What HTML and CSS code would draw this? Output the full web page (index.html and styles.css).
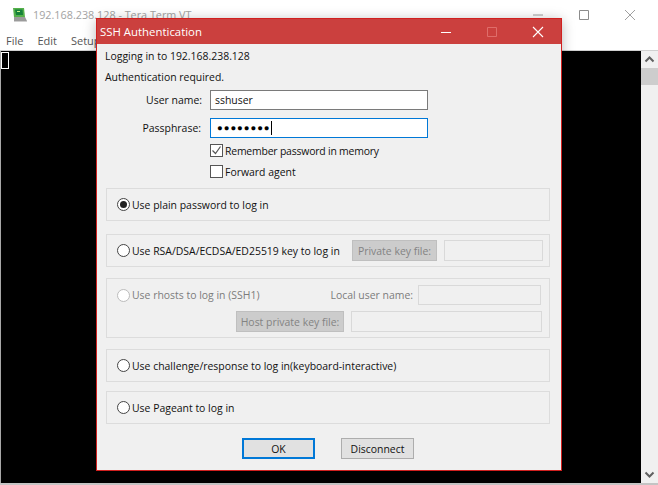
FILE: index.html
```html
<!DOCTYPE html>
<html lang="en">
<head>
<meta charset="utf-8">
<title>SSH Authentication</title>
<link rel="stylesheet" href="styles.css">
</head>
<body>
<div class="app">
  <header class="app-title">
    <svg class="app-icon" width="16" height="16" viewBox="0 0 16 16"><path d="M2 1h11l1 9H3z" fill="#55b04a"/><path d="M4 2.500h7.500l.5 5.500H5z" fill="#15803a"/><path d="M6 4h3v1H6z" fill="#c8ef86"/><path d="M3 10h11l2 4H3z" fill="#9b9b9b"/><path d="M3 14h13v1H3z" fill="#cfcfcf"/></svg>
    <span class="app-name">192.168.238.128 - Tera Term VT</span>
    <div class="app-controls">
      <svg class="ctl" width="46" height="12" viewBox="0 0 46 12"><path d="M18 6h10" stroke="#a0a0a0" fill="none"/></svg>
      <svg class="ctl" width="46" height="12" viewBox="0 0 46 12"><path d="M18.500 1.500h9v9h-9z" stroke="#8c8c8c" fill="none"/></svg>
      <svg class="ctl" width="46" height="12" viewBox="0 0 46 12"><path d="M18 1l10 10M28 1L18 11" stroke="#a0a0a0" fill="none"/></svg>
    </div>
  </header>
  <nav class="app-menu"><span>File</span><span>Edit</span><span>Setup</span></nav>
  <main class="terminal-row">
    <div class="terminal"><div class="cursor"></div></div>
    <div class="scrollbar">
      <svg width="17" height="17" viewBox="0 0 17 17"><path d="M4.500 10.500l4-4 4 4" stroke="#606060" stroke-width="2" fill="none"/></svg>
      <div class="thumb"></div>
      <div class="track"></div>
      <svg width="17" height="17" viewBox="0 0 17 17"><path d="M4.500 6.500l4 4 4-4" stroke="#606060" stroke-width="2" fill="none"/></svg>
    </div>
  </main>
</div>

<section class="dialog">
  <header class="dlg-title">
    <span class="dlg-name">SSH Authentication</span>
    <svg class="dlg-ctl" width="46" height="12" viewBox="0 0 46 12"><path d="M18 6.500h10" stroke="#fff" fill="none"/></svg>
    <svg class="dlg-ctl" width="46" height="12" viewBox="0 0 46 12"><path d="M18.500 1.500h9v9h-9z" stroke="#df6d6a" fill="none"/></svg>
    <svg class="dlg-ctl" width="46" height="12" viewBox="0 0 46 12"><path d="M18 1l10 10M28 1L18 11" stroke="#fff" stroke-width="1.100" fill="none"/></svg>
  </header>
  <div class="dlg-body">
    <p class="line first">Logging in to 192.168.238.128</p>
    <p class="line second">Authentication required.</p>

    <div class="form">
      <label class="lbl lbl-user">User name:</label>
      <div class="input">sshuser</div>
      <label class="lbl lbl-pass">Passphrase:</label>
      <div class="input focused"><span class="dots">●●●●●●●●</span><span class="caret"></span></div>
      <div class="check-row c1">
        <span class="check"><svg width="13" height="13" viewBox="0 0 13 13"><path d="M2.500 6.500l3 3 5-7" stroke="#555" stroke-width="1.200" fill="none"/></svg></span>
        <span class="tight">Remember password in memory</span>
      </div>
      <div class="check-row c2"><span class="check"></span><span>Forward agent</span></div>
    </div>

    <div class="group g-plain">
      <span class="radio on"></span><span class="rtext">Use plain password to log in</span>
    </div>

    <div class="group g-rsa">
      <span class="radio"></span><span class="rtext">Use RSA/DSA/ECDSA/ED25519 key to log in</span>
      <span class="btn-off b-key">Private key file:</span>
      <span class="input-off i-key"></span>
    </div>

    <div class="group g-rhosts disabled">
      <div class="rh-row1">
        <span class="radio"></span><span class="rtext">Use rhosts to log in (SSH1)</span>
        <span class="local">Local user name:</span>
        <span class="input-off i-local"></span>
      </div>
      <div class="rh-row2">
        <span class="btn-off b-host">Host private key file:</span>
        <span class="input-off i-host"></span>
      </div>
    </div>

    <div class="group g-chal">
      <span class="radio"></span><span class="rtext">Use challenge/response to log in(keyboard-interactive)</span>
    </div>

    <div class="group g-pag">
      <span class="radio"></span><span class="rtext">Use Pageant to log in</span>
    </div>

    <div class="actions">
      <button class="btn primary" type="button">OK</button>
      <button class="btn" type="button">Disconnect</button>
    </div>
  </div>
</section>
</body>
</html>
```

FILE: styles.css
```css
* { box-sizing: border-box; }
html, body { margin: 0; padding: 0; }
body {
  width: 658px; height: 485px; overflow: hidden; position: relative;
  font-family: "Open Sans", "Noto Sans", sans-serif; font-size: 10.45px; color: #111; background: #fff;
}
.app { height: 485px; display: flex; flex-direction: column; border-bottom: 2px solid #c4c4c4; }
.app-title { height: 32px; display: flex; align-items: center; padding-left: 11px; background: #fff; flex: none; }
.app-icon { margin-right: 6px; margin-top: -3px; flex: none; }
.app-name { color: #a3a3a3; font-size: 10.8px; margin-top: -3px; }
.app-controls { margin-left: auto; display: flex; margin-top: -3px; margin-right: 5px; }
.ctl { display: block; }
.app-menu { height: 18px; display: flex; gap: 14px; padding-left: 6px; color: #555; font-size: 11px; align-items: center; flex: none; margin-top: -1px; margin-bottom: 1px; }
.terminal-row { flex: 1; display: flex; min-height: 0; border-top: 1px solid #d0d0d0; }
.terminal { flex: 1; background: #000; padding-top: 1px; border-left: 1px solid #a8a8a8; }
.cursor { width: 8px; height: 17px; border: 1px solid #fff; }
.scrollbar { width: 17px; background: #f0f0f0; display: flex; flex-direction: column; }
.scrollbar svg { display: block; flex: none; }
.thumb { height: 17px; background: #cdcdcd; flex: none; }
.track { flex: 1; }

.dialog {
  position: absolute; left: 96px; top: 18px; width: 466px; height: 453px;
  border: 1px solid #d1201f; background: #f0f0f0;
  box-shadow: 0 2px 12px rgba(0,0,0,.28);
  display: flex; flex-direction: column;
}
.dlg-title { height: 25px; background: #cb403e; color: #fff; display: flex; align-items: center; flex: none; }
.dlg-name { font-size: 11.4px; margin-left: 3px; margin-right: auto; }
.dlg-ctl { display: block; }
.dlg-body { flex: 1; padding: 0 11px 0 9px; position: relative; }
.line { margin: 0 0 0 -1px; height: 16px; line-height: 16px; white-space: nowrap; }
.first { margin-top: 4px; }
.second { margin-top: 5px; }

.form { display: grid; grid-template-columns: 104px 218px; margin-top: 5px; height: 98px; grid-template-rows: 20px 20px 21px 21px; }
.lbl { text-align: right; line-height: 20px; padding-right: 8px; }
.lbl-pass { margin-top: 8px; padding-right: 9px; }
.input { height: 20px; border: 1px solid #7a7a7a; background: #fff; line-height: 18px; padding-left: 4px; }
.input.focused { border-color: #0078d7; margin-top: 8px; display: flex; align-items: center; padding-left: 6px; }
.dots { font-size: 9.5px; letter-spacing: 0.95px; line-height: 18px; color: #000; white-space: nowrap; }
.caret { width: 1px; height: 14px; background: #000; margin-left: 0; flex: none; }
.check-row { grid-column: 2; display: flex; align-items: center; gap: 2px; white-space: nowrap; }
.c1 { margin-top: 13px; height: 15px; }
.c2 { margin-top: 13px; height: 15px; }
.tight { letter-spacing: -0.2px; }
.check { width: 13px; height: 13px; border: 1px solid #555; background: #fff; display: block; flex: none; position: relative; }
.check svg { position: absolute; left: -1px; top: -1px; }

.group { border: 1px solid #dcdcdc; display: flex; align-items: center; padding-left: 10px; width: 444px; white-space: nowrap; }
.radio { width: 13px; height: 13px; border: 1px solid #444; border-radius: 50%; background: #fff; flex: none; display: block; position: relative; }
.radio.on::after { content: ""; position: absolute; left: 2px; top: 2px; width: 7px; height: 7px; border-radius: 50%; background: #222; }
.rtext { margin-left: 2px; }
.g-plain { height: 33px; }
.g-rsa { height: 33px; margin-top: 13px; }
.g-rhosts { height: 60px; margin-top: 11px; display: block; padding: 0 8px 0 10px; }
.g-chal { height: 33px; margin-top: 11px; }
.g-pag { height: 33px; margin-top: 9px; }
.btn-off { background: #cccccc; border: 1px solid #bfbfbf; color: #838383; display: flex; align-items: center; justify-content: center; flex: none; }
.input-off { border: 1px solid #d9d9d9; background: #f0f0f0; display: block; flex: none; }
.b-key { width: 85px; height: 21px; margin-left: auto; }
.i-key { width: 99px; height: 21px; margin-left: 7px; margin-right: 6px; }
.disabled .radio { border-color: #bcbcbc; }
.disabled .rtext { color: #7c7c7c; }
.rh-row1 { display: flex; align-items: center; height: 20px; margin-top: 6px; }
.local { margin-left: auto; color: #7c7c7c; }
.i-local { width: 123px; height: 20px; margin-left: 5px; }
.rh-row2 { display: flex; align-items: center; justify-content: flex-end; margin-top: 6px; }
.b-host { width: 108px; height: 21px; }
.i-host { width: 191px; height: 21px; margin-left: 7px; margin-right: -1px; }
.actions { display: flex; gap: 26px; margin-top: 14px; padding-left: 136px; }
.btn { width: 73px; height: 21px; background: #e1e1e1; border: 1px solid #adadad; font: inherit; color: #111; padding: 0; }
.btn.primary { border: 2px solid #0078d7; }
```
